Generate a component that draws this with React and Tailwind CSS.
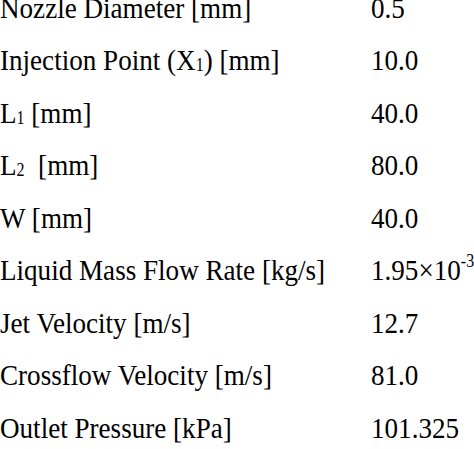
import React from 'react';

// Simulation parameters, label / value pairs
const sub = 'text-[16px] align-baseline bottom-[-1px]';

const rows = [
  { label: <>Nozzle Diameter [mm]</>, value: <>0.5</> },
  { label: <>Injection Point (X<sub className={sub}>1</sub>) [mm]</>, value: <>10.0</> },
  { label: <>L<sub className={sub}>1</sub> [mm]</>, value: <>40.0</> },
  { label: <>L<sub className={sub}>2</sub>{'\u00a0 '}[mm]</>, value: <>80.0</> },
  { label: <>W [mm]</>, value: <>40.0</> },
  { label: <>Liquid Mass Flow Rate [kg/s]</>, value: <>1.95×10<sup className="text-[16px] top-[-12px]">-3</sup></> },
  { label: <>Jet Velocity [m/s]</>, value: <>12.7</> },
  { label: <>Crossflow Velocity [m/s]</>, value: <>81.0</> },
  { label: <>Outlet Pressure [kPa]</>, value: <>101.325</> },
];

export default function App() {
  return (
    <div
      className="w-[474px] h-[449px] overflow-hidden bg-white text-black"
      style={{ fontFamily: '"Liberation Serif", "Times New Roman", serif' }}
    >
      <div className="-mt-[18px] flex flex-col">
        {rows.map((row, i) => (
          <div key={i} className="grid grid-cols-[371px_1fr] h-[52.5px] items-center text-[27.1px] leading-none whitespace-nowrap">
            <span className="block scale-y-[1.12] origin-center">{row.label}</span>
            <span className="block scale-y-[1.12] origin-center">{row.value}</span>
          </div>
        ))}
      </div>
    </div>
  );
}
